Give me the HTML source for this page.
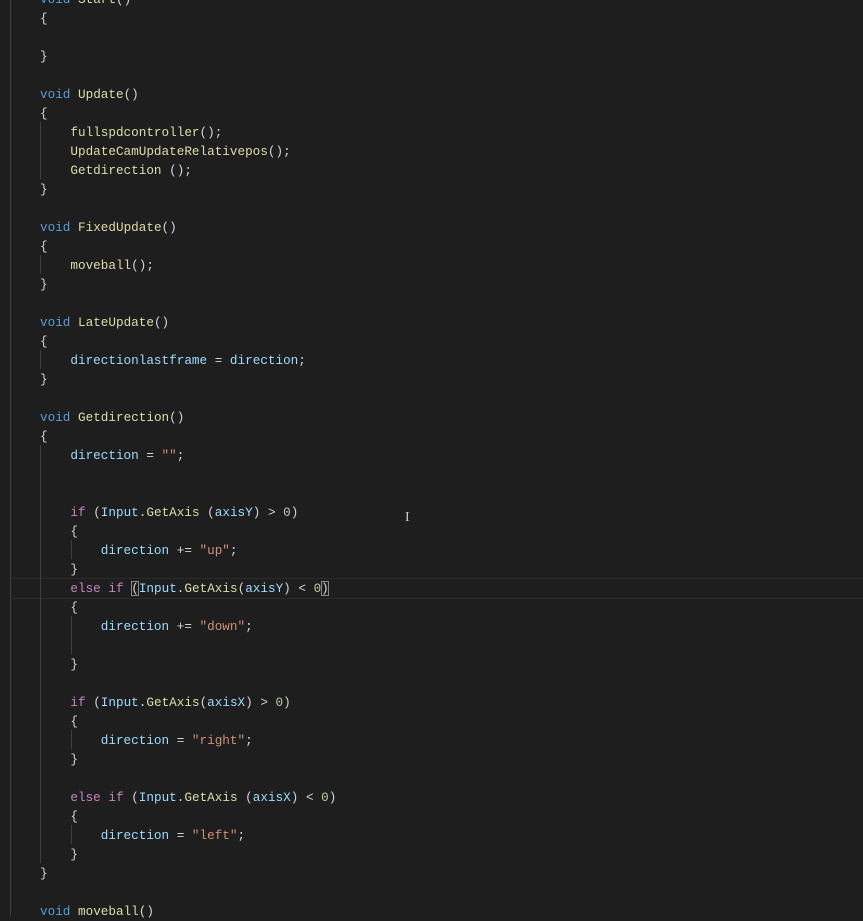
<!DOCTYPE html><html><head><style>
body{margin:0;background:#1e1e1e;width:863px;height:916px;overflow:hidden;position:relative;font-family:"Liberation Mono",monospace;font-size:12.67px}
.l{position:absolute;left:40px;height:19px;line-height:19px;white-space:pre;color:#d4d4d4}
.k{color:#569cd6}.c{color:#c586c0}.f{color:#dcdcaa}.v{color:#9cdcfe}.s{color:#ce9178}.n{color:#b5cea8}.t{color:#4ec9b0}
.g{position:absolute;width:1px;background:#404040}
.b{outline:1px solid #888;outline-offset:-1px}
</style></head><body>
<div class="g" style="left:10px;top:0;height:916px"></div>
<div style="position:absolute;left:10px;right:0;top:578px;height:19px;border-top:1px solid #2a2a2a;border-bottom:1px solid #2a2a2a"></div>
<div class="g" style="left:40px;top:122px;height:57px"></div>
<div class="g" style="left:40px;top:255px;height:19px"></div>
<div class="g" style="left:40px;top:350px;height:19px"></div>
<div class="g" style="left:40px;top:445px;height:418px"></div>
<div class="g" style="left:71px;top:540px;height:19px"></div>
<div class="g" style="left:71px;top:616px;height:38px"></div>
<div class="g" style="left:71px;top:730px;height:19px"></div>
<div class="g" style="left:71px;top:825px;height:19px"></div>
<div id="c"></div>
<div style="position:absolute;left:405px;top:510px;color:#ccc;font-size:14px;font-family:'Liberation Serif',serif">I</div>
<script>
var rows={0:'<span class="k">void</span> <span class="f">Start</span>()',1:'{',3:'}',
5:'<span class="k">void</span> <span class="f">Update</span>()',6:'{',
7:'    <span class="f">fullspdcontroller</span>();',8:'    <span class="f">UpdateCamUpdateRelativepos</span>();',9:'    <span class="f">Getdirection</span> ();',10:'}',
12:'<span class="k">void</span> <span class="f">FixedUpdate</span>()',13:'{',14:'    <span class="f">moveball</span>();',15:'}',
17:'<span class="k">void</span> <span class="f">LateUpdate</span>()',18:'{',19:'    <span class="v">directionlastframe</span> = <span class="v">direction</span>;',20:'}',
22:'<span class="k">void</span> <span class="f">Getdirection</span>()',23:'{',24:'    <span class="v">direction</span> = <span class="s">""</span>;',
27:'    <span class="c">if</span> (<span class="v">Input</span>.<span class="f">GetAxis</span> (<span class="v">axisY</span>) &gt; <span class="n">0</span>)',28:'    {',
29:'        <span class="v">direction</span> += <span class="s">"up"</span>;',30:'    }',
31:'    <span class="c">else</span> <span class="c">if</span> <span class="b">(</span><span class="v">Input</span>.<span class="f">GetAxis</span>(<span class="v">axisY</span>) &lt; <span class="n">0</span><span class="b">)</span>',32:'    {',
33:'        <span class="v">direction</span> += <span class="s">"down"</span>;',35:'    }',
37:'    <span class="c">if</span> (<span class="v">Input</span>.<span class="f">GetAxis</span>(<span class="v">axisX</span>) &gt; <span class="n">0</span>)',38:'    {',
39:'        <span class="v">direction</span> = <span class="s">"right"</span>;',40:'    }',
42:'    <span class="c">else</span> <span class="c">if</span> (<span class="v">Input</span>.<span class="f">GetAxis</span> (<span class="v">axisX</span>) &lt; <span class="n">0</span>)',43:'    {',
44:'        <span class="v">direction</span> = <span class="s">"left"</span>;',45:'    }',46:'}',
48:'<span class="k">void</span> <span class="f">moveball</span>()'};
var h='';for(var i in rows){h+='<div class="l" style="top:'+(-10.5+19*i)+'px">'+rows[i]+'</div>';}
document.getElementById('c').innerHTML=h;
</script>
</body></html>
